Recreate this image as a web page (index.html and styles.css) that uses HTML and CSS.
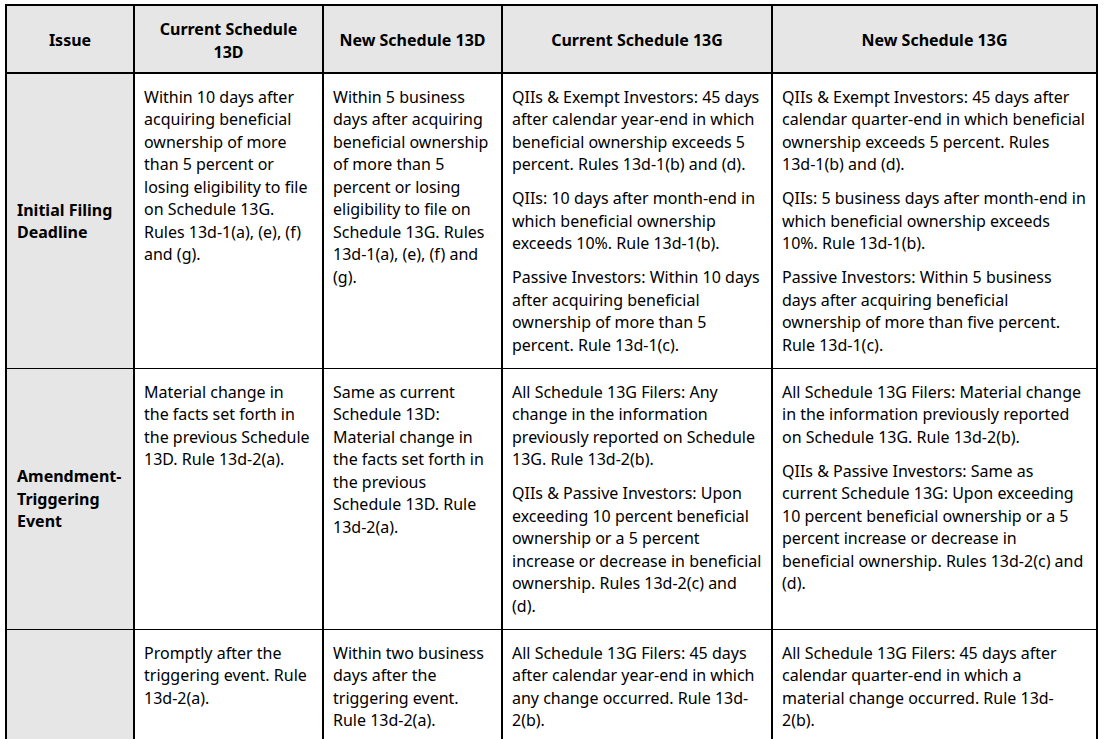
FILE: index.html
```
<!DOCTYPE html>
<html lang="en">
<head>
<meta charset="utf-8">
<title>Schedule 13D and 13G comparison</title>
<link rel="stylesheet" href="styles.css">
</head>
<body>
<table class="cmp">
  <colgroup>
    <col class="c-issue">
    <col class="c-cur13d">
    <col class="c-new13d">
    <col class="c-cur13g">
    <col class="c-new13g">
  </colgroup>
  <thead>
    <tr>
      <th>Issue</th>
      <th>Current Schedule<br>13D</th>
      <th>New Schedule 13D</th>
      <th>Current Schedule 13G</th>
      <th>New Schedule 13G</th>
    </tr>
  </thead>
  <tbody>
    <tr>
      <th class="label">Initial Filing<br>Deadline</th>
      <td><p>Within 10 days after<br>acquiring beneficial<br>ownership of more<br>than 5 percent or<br>losing eligibility to file<br>on Schedule 13G.<br>Rules 13d-1(a), (e), (f)<br>and (g).</p></td>
      <td><p>Within 5 business<br>days after acquiring<br>beneficial ownership<br>of more than 5<br>percent or losing<br>eligibility to file on<br>Schedule 13G. Rules<br>13d-1(a), (e), (f) and<br>(g).</p></td>
      <td>
        <p>QIIs &amp; Exempt Investors: 45 days<br>after calendar year-end in which<br>beneficial ownership exceeds 5<br>percent. Rules 13d-1(b) and (d).</p>
        <p>QIIs: 10 days after month-end in<br>which beneficial ownership<br>exceeds 10%. Rule 13d-1(b).</p>
        <p>Passive Investors: Within 10 days<br>after acquiring beneficial<br>ownership of more than 5<br>percent. Rule 13d-1(c).</p>
      </td>
      <td>
        <p>QIIs &amp; Exempt Investors: 45 days after<br>calendar quarter-end in which beneficial<br>ownership exceeds 5 percent. Rules<br>13d-1(b) and (d).</p>
        <p>QIIs: 5 business days after month-end in<br>which beneficial ownership exceeds<br>10%. Rule 13d-1(b).</p>
        <p>Passive Investors: Within 5 business<br>days after acquiring beneficial<br>ownership of more than five percent.<br>Rule 13d-1(c).</p>
      </td>
    </tr>
    <tr>
      <th class="label">Amendment-<br>Triggering<br>Event</th>
      <td><p>Material change in<br>the facts set forth in<br>the previous Schedule<br>13D. Rule 13d-2(a).</p></td>
      <td><p>Same as current<br>Schedule 13D:<br>Material change in<br>the facts set forth in<br>the previous<br>Schedule 13D. Rule<br>13d-2(a).</p></td>
      <td>
        <p>All Schedule 13G Filers: Any<br>change in the information<br>previously reported on Schedule<br>13G. Rule 13d-2(b).</p>
        <p>QIIs &amp; Passive Investors: Upon<br>exceeding 10 percent beneficial<br>ownership or a 5 percent<br>increase or decrease in beneficial<br>ownership. Rules 13d-2(c) and<br>(d).</p>
      </td>
      <td>
        <p>All Schedule 13G Filers: Material change<br>in the information previously reported<br>on Schedule 13G. Rule 13d-2(b).</p>
        <p>QIIs &amp; Passive Investors: Same as<br>current Schedule 13G: Upon exceeding<br>10 percent beneficial ownership or a 5<br>percent increase or decrease in<br>beneficial ownership. Rules 13d-2(c) and<br>(d).</p>
      </td>
    </tr>
    <tr class="last">
      <th class="label"></th>
      <td><p>Promptly after the<br>triggering event. Rule<br>13d-2(a).</p></td>
      <td><p>Within two business<br>days after the<br>triggering event.<br>Rule 13d-2(a).</p></td>
      <td><p>All Schedule 13G Filers: 45 days<br>after calendar year-end in which<br>any change occurred. Rule 13d-<br>2(b).</p></td>
      <td><p>All Schedule 13G Filers: 45 days after<br>calendar quarter-end in which a<br>material change occurred. Rule 13d-<br>2(b).</p></td>
    </tr>
  </tbody>
</table>
</body>
</html>
```
FILE: styles.css
```
html, body {
  margin: 0;
  padding: 0;
  background: #ffffff;
}

body {
  padding: 4px 0 0 5px;
  font-family: "Noto Sans", "Open Sans", sans-serif;
  font-size: 16px;
  line-height: 22.5px;
  color: #000000;
}

.cmp {
  width: 1091px;
  table-layout: fixed;
  border-collapse: collapse;
  border: 2px solid #000;
}

.c-issue { width: 128px; }
.c-cur13d { width: 189px; }
.c-new13d { width: 179px; }
.c-cur13g { width: 270px; }
.c-new13g { width: 325px; }

.cmp th,
.cmp td {
  border-left: 2px solid #000;
  border-right: 2px solid #000;
  border-top: 1px solid #000;
  border-bottom: 1px solid #000;
}

.cmp thead th {
  background: #e7e6e6;
  font-weight: 700;
  text-align: center;
  vertical-align: middle;
  padding: 12px 6px 9px;
  border-bottom: 2px solid #000;
  white-space: nowrap;
}

.cmp th.label {
  background: #e7e6e6;
  font-weight: 700;
  text-align: left;
  vertical-align: middle;
  padding: 10px 8px 10px 10px;
  white-space: nowrap;
}

.cmp td {
  vertical-align: top;
  padding: 11.5px 8px 12px 9px;
}

.cmp p {
  margin: 0 0 11.5px;
  white-space: nowrap;
}

.cmp p:last-child {
  margin-bottom: 0;
}

.cmp tr.last td {
  padding-bottom: 40px;
}
```
